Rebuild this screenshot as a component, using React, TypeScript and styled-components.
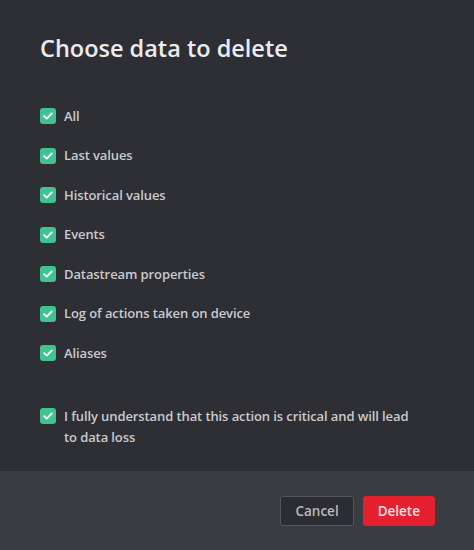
import styled, { createGlobalStyle } from "styled-components"

const Global = createGlobalStyle`
html, body {
  margin: 0;
  padding: 0;
  background: #2e2f34;
}
`;

const options = [
    "All",
    "Last values",
    "Historical values",
    "Events",
    "Datastream properties",
    "Log of actions taken on device",
    "Aliases",
]

const Check = () => {
    return (
        <Box>
            <svg width="10" height="8" viewBox="0 0 10 8" fill="none">
                <path d="M1.2 4.2 L3.8 6.6 L8.8 1.4" stroke="#ffffff" strokeWidth="1.9" strokeLinecap="round" strokeLinejoin="round" />
            </svg>
        </Box>
    )
}

const App = () => {
    return (
        <div>
            <Global />
            <Modal>
                <Body>
                    <Title>Choose data to delete</Title>
                    <List>
                        {options.map((o) => (
                            <Row key={o}>
                                <Check />
                                <Label>{o}</Label>
                            </Row>
                        ))}
                    </List>
                    <Confirm>
                        <Check />
                        <Label>I fully understand that this action is critical and will lead to data loss</Label>
                    </Confirm>
                </Body>
                <Footer>
                    <Button>Cancel</Button>
                    <Button danger>Delete</Button>
                </Footer>
            </Modal>
        </div>
    )
}

export default App


const Modal = styled.div`
width: 474px;
height: 550px;
display: flex;
flex-direction: column;
background: #2e2f34;
font-family: "Open Sans", "Noto Sans", sans-serif;
`;
const Body = styled.div`
flex: 1;
padding: 34px 40px 0 40px;
box-sizing: border-box;
`;
const Title = styled.div`
font-family: "Open Sans", "Lato", sans-serif;
font-size: 23.5px;
font-weight: 600;
color: #ececee;
line-height: 28px;
`;
const List = styled.div`
margin-top: 44px;
display: flex;
flex-direction: column;
gap: 19.5px;
`;
const Row = styled.div`
display: flex;
align-items: center;
gap: 8px;
height: 20px;
`;
const Confirm = styled.div`
margin-top: 43px;
display: flex;
align-items: flex-start;
gap: 8px;
padding-right: 20px;
`;
const Box = styled.div`
width: 16px;
height: 16px;
flex: 0 0 16px;
border-radius: 3px;
background: #41c391;
display: flex;
align-items: center;
justify-content: center;
margin-top: 2px;
${Row} & {
  margin-top: 0;
}
`;
const Label = styled.div`
font-size: 13px;
font-weight: 600;
color: #c9cace;
line-height: 21px;
letter-spacing: -0.1px;
`;
const Footer = styled.div`
height: 79px;
background: #3b3c41;
display: flex;
justify-content: flex-end;
align-items: flex-start;
gap: 9px;
padding: 25px 39px 0 0;
box-sizing: border-box;
`;
const Button = styled.div<{ danger?: boolean }>`
height: 30px;
box-sizing: border-box;
padding: 0 14px;
min-width: 72px;
display: flex;
align-items: center;
justify-content: center;
border-radius: 3px;
font-size: 13.5px;
font-weight: 600;
color: ${(p) => (p.danger ? "#ffe6e8" : "#b9babe")};
background: ${(p) => (p.danger ? "#e5202f" : "#2c2d32")};
border: 1px solid ${(p) => (p.danger ? "#e5202f" : "#55565b")};
`;
